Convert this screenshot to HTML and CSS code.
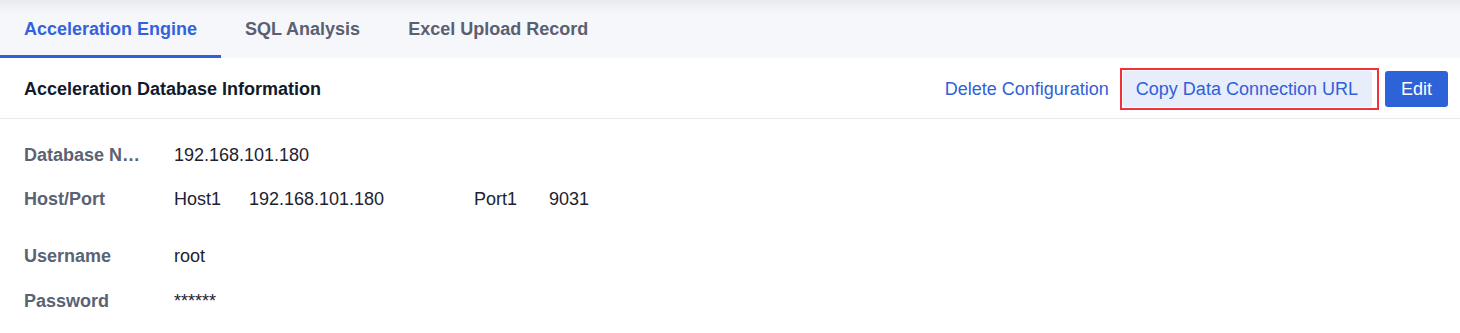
FILE: index.html
```html
<!DOCTYPE html>
<html lang="en">
<head>
  <meta charset="UTF-8">
  <meta name="viewport" content="width=device-width, initial-scale=1">
  <title>Acceleration Engine</title>
  <link rel="stylesheet" href="styles.css">
</head>
<body>
  <div class="tabs">
    <button class="tab-btn active">Acceleration Engine</button>
    <button class="tab-btn">SQL Analysis</button>
    <button class="tab-btn">Excel Upload Record</button>
  </div>
  <section class="panel">
    <div class="panel-head">
      <h2 class="title">Acceleration Database Information</h2>
      <div class="actions">
        <button class="link">Delete Configuration</button>
        <span class="mark"><button class="copy">Copy Data Connection URL</button></span>
        <button class="primary">Edit</button>
      </div>
    </div>
    <div class="info">
      <div class="row">
        <span class="label">Database Name</span>
        <span class="value">192.168.101.180</span>
      </div>
      <div class="row row-host">
        <span class="label">Host/Port</span>
        <div class="pairs">
          <span class="key">Host1</span><span class="val ip">192.168.101.180</span>
          <span class="key">Port1</span><span class="val">9031</span>
        </div>
      </div>
      <div class="row">
        <span class="label">Username</span>
        <span class="value">root</span>
      </div>
      <div class="row">
        <span class="label">Password</span>
        <span class="value">******</span>
      </div>
    </div>
  </section>
</body>
</html>
```

FILE: styles.css
```css
:root {
  --primary: #2e62d9;
  --text: #1d2230;
  --muted: #5a6273;
  --line: #e8e9ed;
}
* { box-sizing: border-box; margin: 0; padding: 0; }
body {
  background: #fff;
  font-family: 'Liberation Sans', Arial, sans-serif;
  font-size: 18px;
  color: var(--text);
}
button { font: inherit; cursor: pointer; }

.tabs {
  display: flex;
  height: 58px;
  background: linear-gradient(#e9eaee 0, #f3f4f8 10px, #f6f7fb 16px);
}
.tab-btn {
  padding: 3px 24px 0;
  background: none;
  border: none;
  border-bottom: 3px solid transparent;
  font-weight: bold;
  color: #5a6070;
}
.tab-btn.active {
  color: #3263dc;
  border-color: var(--primary);
}

.panel-head {
  display: flex;
  align-items: center;
  justify-content: space-between;
  height: 61px;
  padding: 2px 12px 0 24px;
  border-bottom: 1px solid var(--line);
}
.title {
  font-size: 18px;
  font-weight: bold;
  color: #131a2c;
}
.actions {
  display: flex;
  align-items: center;
}
.link {
  background: none;
  border: none;
  color: #2f5fdb;
  margin-right: 11px;
}
.mark {
  display: flex;
  border: 2px solid #f0323a;
  padding: 1px 5px 1px 1px;
  margin-right: 6px;
}
.copy {
  height: 36px;
  padding: 0 14px 0 13px;
  background: #e7edfb;
  color: #2f5fdb;
  border: none;
  border-radius: 3px;
}
.primary {
  height: 36px;
  padding: 0 16px;
  background: var(--primary);
  color: #fff;
  border: none;
  border-radius: 3px;
}

.info { padding: 14px 24px; }
.row {
  display: flex;
  align-items: center;
  height: 44px;
}
.row-host { margin-bottom: 13px; }
.row:last-child { height: 46px; }
.label {
  width: 150px;
  padding-right: 30px;
  flex-shrink: 0;
  font-weight: bold;
  color: var(--muted);
  white-space: nowrap;
  overflow: hidden;
  text-overflow: ellipsis;
}
.pairs {
  display: grid;
  grid-template-columns: 75px 225px 75px auto;
}
```
